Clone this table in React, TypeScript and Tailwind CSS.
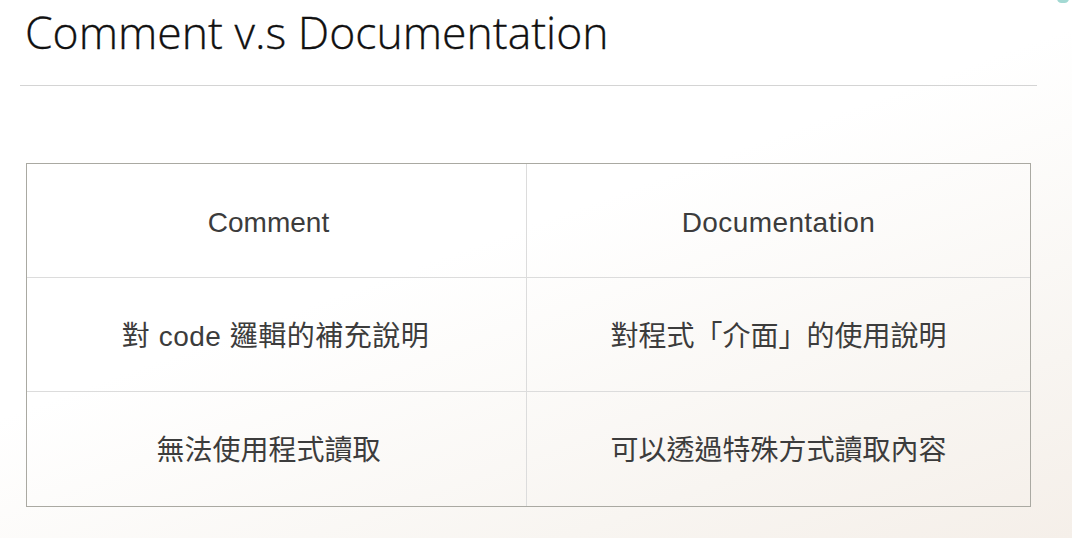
import React from "react";

const cjk = '"Liberation Sans", "Noto Sans CJK TC", sans-serif';

export default function App() {
  const rows: [string, string][] = [
    ["對 code 邏輯的補充說明", "對程式「介面」的使用說明"],
    ["無法使用程式讀取", "可以透過特殊方式讀取內容"],
  ];
  return (
    <div className="relative w-[1072px] h-[538px] overflow-hidden bg-[linear-gradient(160deg,#ffffff_0%,#ffffff_45%,#f8f5f1_80%,#f5efe9_100%)]">
      <div className="absolute right-[3px] top-[-6px] w-[12px] h-[9px] rounded-full bg-[#7cc9c0] opacity-70" />
      <div className="pl-[25px] pt-[3px] h-[85px]">
        <h1
          className="text-[44.5px] leading-[58px] font-light text-[#111] [-webkit-text-stroke:0.3px_#111]"
          style={{ fontFamily: '"Open Sans", "Noto Sans", sans-serif' }}
        >
          Comment v.s Documentation
        </h1>
      </div>
      <div className="ml-[20px] w-[1017px] h-[1px] bg-[#d4d4d4]" />
      <div className="ml-[26px] mt-[77px] w-[1005px] border-[1.5px] border-[#aaa9a2]">
        <div
          className="grid grid-cols-[500px_1fr] text-[#3c3c3c] text-[28px] leading-[34px]"
          style={{ fontFamily: cjk }}
        >
          <div className="h-[114px] flex items-center justify-center border-r border-b border-[#dcdcdc] pr-[16px] pt-[4px]">
            <span>Comment</span>
          </div>
          <div className="h-[114px] flex items-center justify-center border-b border-[#dcdcdc] pt-[4px]">
            <span className="tracking-[0.4px]">Documentation</span>
          </div>
          {rows.map(([a, b], i) => (
            <React.Fragment key={i}>
              <div
                className={`h-[114px] flex items-center justify-center border-r border-[#dcdcdc] pt-[4px] ${
                  i === 0 ? "border-b pr-[2px]" : "pr-[16px]"
                }`}
              >
                <span className={i === 0 ? "tracking-[0.5px]" : ""}>{a}</span>
              </div>
              <div
                className={`h-[114px] flex items-center justify-center border-[#dcdcdc] pt-[4px] ${
                  i === 0 ? "border-b" : ""
                }`}
              >
                <span>{b}</span>
              </div>
            </React.Fragment>
          ))}
        </div>
      </div>
    </div>
  );
}
